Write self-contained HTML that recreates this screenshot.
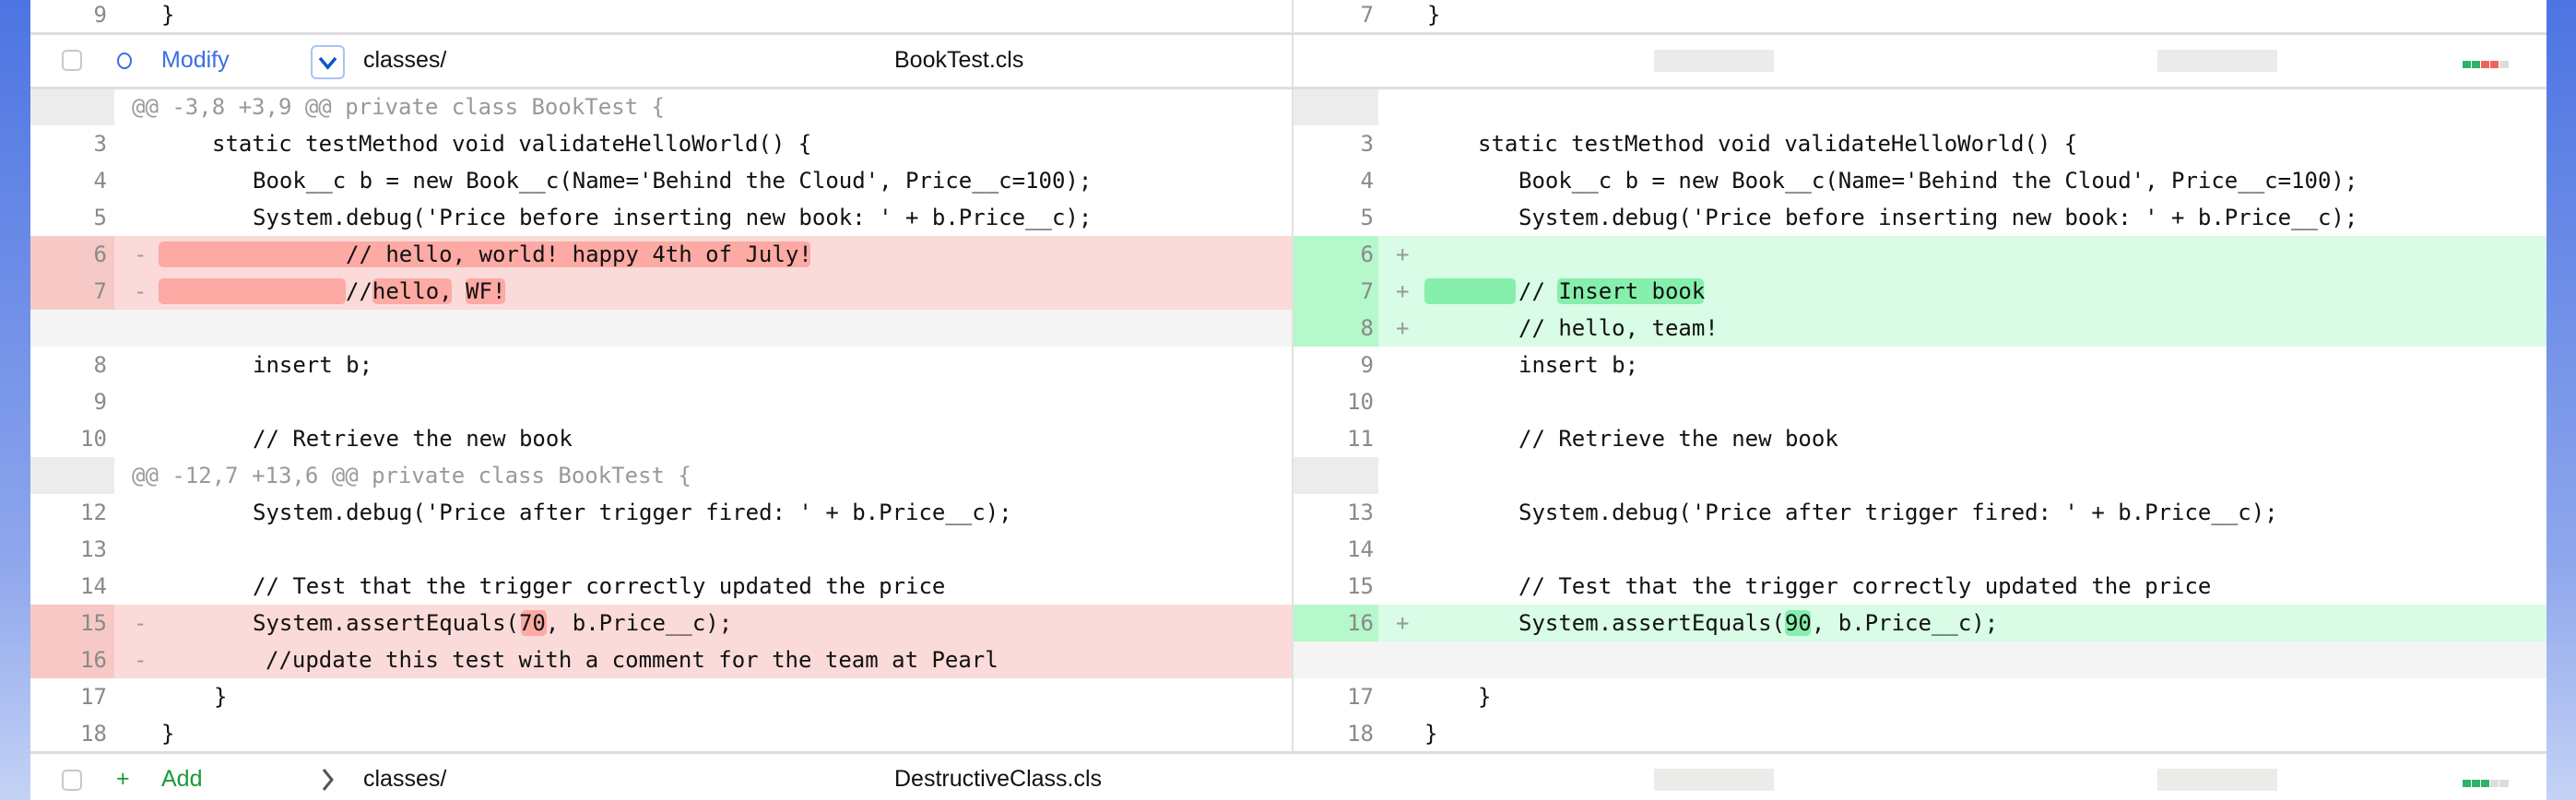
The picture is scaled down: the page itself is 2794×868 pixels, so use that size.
<!DOCTYPE html>
<html><head><meta charset="utf-8"><style>
*{margin:0;padding:0;box-sizing:border-box}
body{width:2794px;height:868px;overflow:hidden;position:relative;background:#fff;font-family:"DejaVu Sans Mono","Liberation Mono",monospace}
.bl{position:absolute;top:0;height:868px;width:33px;background:linear-gradient(#4d74e2,#8ea6ec 70%,#c4d2f5)}
.r{position:absolute;height:40px}
.t{position:absolute;font-size:24px;line-height:40px;white-space:pre;color:#111}
.n{position:absolute;font-size:24px;line-height:40px;color:#8a8a8a;text-align:right;width:60px}
.hl{border-radius:5px}
.s{font-family:"Liberation Sans",sans-serif;position:absolute;font-size:25px;line-height:30px;white-space:pre}
.gb{position:absolute;background:#ebebe9;height:24px;width:130px}
</style></head><body>
<div class="bl" style="left:0"></div>
<div class="bl" style="left:2762px"></div>
<div style="position:absolute;left:33px;top:0;width:2729px;height:868px;background:#fff"></div>
<!-- divider -->
<div style="position:absolute;left:1401px;top:0;width:2px;height:816px;background:#e2e2e2"></div>

<!-- top row -->
<div class="n" style="left:56px;top:-4px">9</div><div class="t" style="left:175px;top:-4px">}</div>
<div class="n" style="left:1430px;top:-4px">7</div><div class="t" style="left:1548px;top:-4px">}</div>
<div style="position:absolute;left:33px;top:35px;width:2729px;height:3px;background:#dedede"></div>

<!-- header -->
<div style="position:absolute;left:67px;top:54px;width:22px;height:23px;border:2px solid #c8c8c8;border-radius:5px"></div>
<div style="position:absolute;left:127px;top:57px;width:16px;height:18px;border:2px solid #3b6fe0;border-radius:50%"></div>
<div class="s" style="left:175px;top:50px;color:#3b6fe0">Modify</div>
<div style="position:absolute;left:337px;top:49px;width:37px;height:37px;border:2px solid #a9c4f0;border-radius:6px;background:#fff"></div>
<svg style="position:absolute;left:340px;top:55px" width="31" height="26"><path d="M7 8 L15.5 18 L24 8" stroke="#0b57c6" stroke-width="3.5" fill="none"/></svg>
<div class="s" style="left:394px;top:50px;color:#111">classes/</div>
<div class="s" style="left:970px;top:50px;color:#111">BookTest.cls</div>
<div class="gb" style="left:1794px;top:54px"></div>
<div class="gb" style="left:2340px;top:54px"></div>
<div style="position:absolute;left:2671px;top:66px;height:8px;width:50px;background:linear-gradient(90deg,#2fb36a 0 9px,#fff 9px 10px,#2fb36a 10px 19px,#fff 19px 20px,#f0645c 20px 29px,#fff 29px 30px,#f0645c 30px 39px,#fff 39px 40px,#ddd 40px 50px)"></div>
<div style="position:absolute;left:33px;top:94px;width:2729px;height:3px;background:#dedede"></div>

<!-- row backgrounds -->
<div class="r" style="left:33px;top:97px;width:91px;height:39px;background:#ececec"></div>
<div class="r" style="left:1403px;top:97px;width:92px;height:39px;background:#ececec"></div>
<div class="r" style="left:33px;top:496px;width:91px;background:#ececec"></div>
<div class="r" style="left:1403px;top:496px;width:92px;background:#ececec"></div>

<div class="r" style="left:33px;top:256px;width:1368px;height:80px;background:#fadbd9"></div>
<div class="r" style="left:33px;top:256px;width:91px;height:80px;background:#f7c9c6"></div>
<div class="r" style="left:33px;top:336px;width:1368px;background:#f4f4f4"></div>
<div class="r" style="left:33px;top:656px;width:1368px;height:80px;background:#fadbd9"></div>
<div class="r" style="left:33px;top:656px;width:91px;height:80px;background:#f7c9c6"></div>

<div class="r" style="left:1403px;top:256px;width:1359px;height:120px;background:#d8fce6"></div>
<div class="r" style="left:1403px;top:256px;width:92px;height:120px;background:#b4f8cb"></div>
<div class="r" style="left:1403px;top:656px;width:1359px;background:#d8fce6"></div>
<div class="r" style="left:1403px;top:656px;width:92px;background:#b4f8cb"></div>
<div class="r" style="left:1403px;top:696px;width:1359px;background:#f4f4f4"></div>

<!-- highlights -->
<div class="r hl" style="left:172px;top:262px;width:707px;height:28px;background:#fda9a4"></div>
<div class="r hl" style="left:172px;top:302px;width:203px;height:28px;background:#fda9a4"></div>
<div class="r hl" style="left:404px;top:302px;width:86px;height:28px;background:#fda9a4"></div>
<div class="r hl" style="left:505px;top:302px;width:43px;height:28px;background:#fda9a4"></div>
<div class="r hl" style="left:565px;top:662px;width:28px;height:28px;background:#fda9a4"></div>
<div class="r hl" style="left:1545px;top:302px;width:99px;height:28px;background:#86efac"></div>
<div class="r hl" style="left:1689px;top:302px;width:159px;height:28px;background:#86efac"></div>
<div class="r hl" style="left:1936px;top:662px;width:28px;height:28px;background:#86efac"></div>

<!-- left text -->
<div class="t" style="left:143px;top:96px;color:#999">@@ -3,8 +3,9 @@ private class BookTest {</div>
<div class="n" style="left:56px;top:136px">3</div><div class="t" style="left:230px;top:136px">static testMethod void validateHelloWorld() {</div>
<div class="n" style="left:56px;top:176px">4</div><div class="t" style="left:274px;top:176px">Book__c b = new Book__c(Name='Behind the Cloud', Price__c=100);</div>
<div class="n" style="left:56px;top:216px">5</div><div class="t" style="left:274px;top:216px">System.debug('Price before inserting new book: ' + b.Price__c);</div>
<div class="n" style="left:56px;top:256px">6</div><div class="t" style="left:145px;top:256px;color:#999">-</div><div class="t" style="left:375px;top:256px">// hello, world! happy 4th of July!</div>
<div class="n" style="left:56px;top:296px">7</div><div class="t" style="left:145px;top:296px;color:#999">-</div><div class="t" style="left:375px;top:296px">//hello, WF!</div>
<div class="n" style="left:56px;top:376px">8</div><div class="t" style="left:274px;top:376px">insert b;</div>
<div class="n" style="left:56px;top:416px">9</div>
<div class="n" style="left:56px;top:456px">10</div><div class="t" style="left:274px;top:456px">// Retrieve the new book</div>
<div class="t" style="left:143px;top:496px;color:#999">@@ -12,7 +13,6 @@ private class BookTest {</div>
<div class="n" style="left:56px;top:536px">12</div><div class="t" style="left:274px;top:536px">System.debug('Price after trigger fired: ' + b.Price__c);</div>
<div class="n" style="left:56px;top:576px">13</div>
<div class="n" style="left:56px;top:616px">14</div><div class="t" style="left:274px;top:616px">// Test that the trigger correctly updated the price</div>
<div class="n" style="left:56px;top:656px">15</div><div class="t" style="left:145px;top:656px;color:#999">-</div><div class="t" style="left:274px;top:656px">System.assertEquals(70, b.Price__c);</div>
<div class="n" style="left:56px;top:696px">16</div><div class="t" style="left:145px;top:696px;color:#999">-</div><div class="t" style="left:288px;top:696px">//update this test with a comment for the team at Pearl</div>
<div class="n" style="left:56px;top:736px">17</div><div class="t" style="left:232px;top:736px">}</div>
<div class="n" style="left:56px;top:776px">18</div><div class="t" style="left:175px;top:776px">}</div>

<!-- right text -->
<div class="n" style="left:1430px;top:136px">3</div><div class="t" style="left:1603px;top:136px">static testMethod void validateHelloWorld() {</div>
<div class="n" style="left:1430px;top:176px">4</div><div class="t" style="left:1647px;top:176px">Book__c b = new Book__c(Name='Behind the Cloud', Price__c=100);</div>
<div class="n" style="left:1430px;top:216px">5</div><div class="t" style="left:1647px;top:216px">System.debug('Price before inserting new book: ' + b.Price__c);</div>
<div class="n" style="left:1430px;top:256px">6</div><div class="t" style="left:1514px;top:256px;color:#999">+</div>
<div class="n" style="left:1430px;top:296px">7</div><div class="t" style="left:1514px;top:296px;color:#999">+</div><div class="t" style="left:1647px;top:296px">// Insert book</div>
<div class="n" style="left:1430px;top:336px">8</div><div class="t" style="left:1514px;top:336px;color:#999">+</div><div class="t" style="left:1647px;top:336px">// hello, team!</div>
<div class="n" style="left:1430px;top:376px">9</div><div class="t" style="left:1647px;top:376px">insert b;</div>
<div class="n" style="left:1430px;top:416px">10</div>
<div class="n" style="left:1430px;top:456px">11</div><div class="t" style="left:1647px;top:456px">// Retrieve the new book</div>
<div class="n" style="left:1430px;top:536px">13</div><div class="t" style="left:1647px;top:536px">System.debug('Price after trigger fired: ' + b.Price__c);</div>
<div class="n" style="left:1430px;top:576px">14</div>
<div class="n" style="left:1430px;top:616px">15</div><div class="t" style="left:1647px;top:616px">// Test that the trigger correctly updated the price</div>
<div class="n" style="left:1430px;top:656px">16</div><div class="t" style="left:1514px;top:656px;color:#999">+</div><div class="t" style="left:1647px;top:656px">System.assertEquals(90, b.Price__c);</div>
<div class="n" style="left:1430px;top:736px">17</div><div class="t" style="left:1603px;top:736px">}</div>
<div class="n" style="left:1430px;top:776px">18</div><div class="t" style="left:1545px;top:776px">}</div>

<!-- footer -->
<div style="position:absolute;left:33px;top:815px;width:2729px;height:3px;background:#dedede"></div>
<div style="position:absolute;left:67px;top:835px;width:22px;height:23px;border:2px solid #c8c8c8;border-radius:5px"></div>
<div class="s" style="left:126px;top:830px;color:#1a9a3a">+</div>
<div class="s" style="left:175px;top:830px;color:#1a9a3a">Add</div>
<svg style="position:absolute;left:344px;top:830px" width="24" height="32"><path d="M7 5 L16 16 L7 27" stroke="#555" stroke-width="3" fill="none"/></svg>
<div class="s" style="left:394px;top:830px;color:#111">classes/</div>
<div class="s" style="left:970px;top:830px;color:#111">DestructiveClass.cls</div>
<div class="gb" style="left:1794px;top:834px"></div>
<div class="gb" style="left:2340px;top:834px"></div>
<div style="position:absolute;left:2671px;top:846px;height:8px;width:50px;background:linear-gradient(90deg,#2fb36a 0 9px,#fff 9px 10px,#2fb36a 10px 19px,#fff 19px 20px,#2fb36a 20px 29px,#fff 29px 30px,#ddd 30px 39px,#fff 39px 40px,#ddd 40px 50px)"></div>
</body></html>
